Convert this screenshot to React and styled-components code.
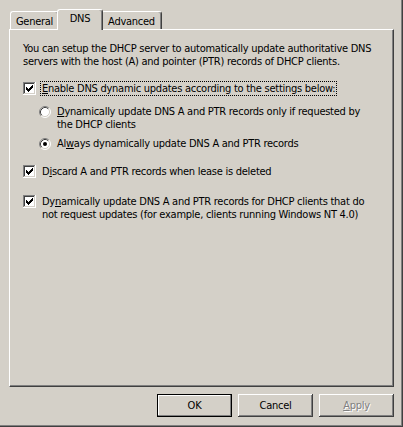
import React from "react";
import styled, { createGlobalStyle } from "styled-components";

const Global = createGlobalStyle`
  html, body { margin: 0; padding: 0; background: #d4d0c8; }
  body {
    font-family: "DejaVu Sans Condensed", "Liberation Sans", Arial, sans-serif;
    font-size: 11px;
    letter-spacing: -0.26px;
    color: #000;
  }
`;

const Window = styled.div`
  box-sizing: border-box;
  width: 403px;
  height: 427px;
  padding: 9px 9px 0 9px;
  background: #d4d0c8;
  box-shadow: inset -1px -1px #404040, inset -2px -2px #808080;
  display: flex;
  flex-direction: column;
`;

const TabRow = styled.div`
  display: flex;
  align-items: flex-end;
  height: 20px;
  padding-left: 1px;
`;

const Tab = styled.div`
  box-sizing: border-box;
  width: ${(p) => p.$w}px;
  height: ${(p) => (p.$active ? 21 : 18)}px;
  margin: ${(p) => (p.$active ? "0 -2px -1px -2px" : "0")};
  padding-top: ${(p) => (p.$active ? 2 : 3)}px;
  line-height: 13px;
  text-align: center;
  white-space: nowrap;
  background: #d4d0c8;
  border-top: 1px solid #fff;
  border-left: 1px solid #fff;
  border-right: 1px solid #404040;
  box-shadow: inset -1px 0 #808080;
  border-radius: 3px 3px 0 0;
  position: relative;
  z-index: ${(p) => (p.$active ? 2 : 1)};
`;

const Panel = styled.div`
  box-sizing: border-box;
  height: 358px;
  border-top: 1px solid #fff;
  border-left: 1px solid #fff;
  border-right: 1px solid #404040;
  border-bottom: 1px solid #404040;
  box-shadow: inset -1px -1px #808080;
  padding: 12px 0 0 13px;
  position: relative;
  z-index: 0;
`;

const Intro = styled.p`
  margin: 0;
  line-height: 13px;
  white-space: nowrap;
`;

const Row = styled.div`
  display: flex;
  align-items: flex-start;
  margin-top: ${(p) => p.$mt}px;
  padding-left: ${(p) => p.$indent || 0}px;
`;

const Label = styled.div`
  line-height: 13px;
  white-space: nowrap;
  margin-left: 6px;
`;

const Focus = styled.span`
  border: 1px dotted #000;
  padding: 0 1px;
  margin-left: -2px;
`;

const BoxSvg = styled.svg`
  flex: none;
  display: block;
  margin-top: ${(p) => p.$mt || 0}px;
`;

const ButtonRow = styled.div`
  display: flex;
  justify-content: flex-end;
  gap: 6px;
  margin-top: 7px;
`;

const Button = styled.div`
  box-sizing: border-box;
  width: 75px;
  height: 23px;
  display: flex;
  align-items: center;
  justify-content: center;
  background: #d4d0c8;
  border: ${(p) => (p.$default ? "1px solid #000" : "none")};
  box-shadow: ${(p) =>
    p.$default
      ? "inset -1px -1px #808080, inset 1px 1px #fff"
      : "inset -1px -1px #404040, inset 1px 1px #fff, inset -2px -2px #808080, inset 2px 2px #d4d0c8"};
  color: ${(p) => (p.$disabled ? "#808080" : "#000")};
  text-shadow: ${(p) => (p.$disabled ? "1px 1px 0 #fff" : "none")};
  padding-bottom: 1px;
`;

function Checkbox({ checked = true }) {
  return (
    <BoxSvg width="13" height="13" viewBox="0 0 13 13" shapeRendering="crispEdges">
      <rect x="0" y="0" width="13" height="13" fill="#fff" />
      <rect x="0" y="0" width="12" height="1" fill="#808080" />
      <rect x="0" y="0" width="1" height="12" fill="#808080" />
      <rect x="1" y="1" width="10" height="1" fill="#404040" />
      <rect x="1" y="1" width="1" height="10" fill="#404040" />
      <rect x="1" y="11" width="11" height="1" fill="#d4d0c8" />
      <rect x="11" y="1" width="1" height="11" fill="#d4d0c8" />
      {checked && (
        <path
          fill="#000"
          d="M9 3h1v1h-1z M8 4h2v1h-2z M3 5h1v1h-1z M7 5h3v1h-3z M3 6h2v1h-2z M6 6h3v1h-3z M3 7h5v1h-5z M4 8h3v1h-3z M5 9h1v1h-1z"
        />
      )}
    </BoxSvg>
  );
}

function Radio({ checked }) {
  return (
    <BoxSvg width="12" height="12" viewBox="0 0 12 12" $mt={1}>
      <circle cx="6" cy="6" r="5" fill="#fff" />
      <path d="M2.11 9.89 A5.5 5.5 0 0 1 9.89 2.11" fill="none" stroke="#808080" strokeWidth="1" />
      <path d="M9.89 2.11 A5.5 5.5 0 0 1 2.11 9.89" fill="none" stroke="#ffffff" strokeWidth="1" />
      <path d="M2.82 9.18 A4.5 4.5 0 0 1 9.18 2.82" fill="none" stroke="#404040" strokeWidth="1" />
      <path d="M9.18 2.82 A4.5 4.5 0 0 1 2.82 9.18" fill="none" stroke="#d4d0c8" strokeWidth="1" />
      {checked && <circle cx="6" cy="6" r="2" fill="#000" />}
    </BoxSvg>
  );
}

export default function App() {
  return (
    <>
      <Global />
      <Window>
        <TabRow>
          <Tab $w={49}>General</Tab>
          <Tab $w={46} $active>
            DNS
          </Tab>
          <Tab $w={61}>Advanced</Tab>
        </TabRow>
        <Panel>
          <Intro>
            You can setup the DHCP server to automatically update authoritative DNS
            <br />
            servers with the host (A) and pointer (PTR) records of DHCP clients.
          </Intro>
          <Row $mt={14}>
            <Checkbox />
            <Label>
              <Focus>
                <u>E</u>nable DNS dynamic updates according to the settings below:
              </Focus>
            </Label>
          </Row>
          <Row $mt={10} $indent={16}>
            <Radio />
            <Label>
              <u>D</u>ynamically update DNS A and PTR records only if requested by
              <br />
              the DHCP clients
            </Label>
          </Row>
          <Row $mt={6} $indent={16}>
            <Radio checked />
            <Label>
              Al<u>w</u>ays dynamically update DNS A and PTR records
            </Label>
          </Row>
          <Row $mt={15}>
            <Checkbox />
            <Label>
              D<u>i</u>scard A and PTR records when lease is deleted
            </Label>
          </Row>
          <Row $mt={17}>
            <Checkbox />
            <Label>
              Dy<u>n</u>amically update DNS A and PTR records for DHCP clients that do
              <br />
              not request updates (for example, clients running Windows NT 4.0)
            </Label>
          </Row>
        </Panel>
        <ButtonRow>
          <Button $default>OK</Button>
          <Button>Cancel</Button>
          <Button $disabled>
            <span>
              <u>A</u>pply
            </span>
          </Button>
        </ButtonRow>
      </Window>
    </>
  );
}
